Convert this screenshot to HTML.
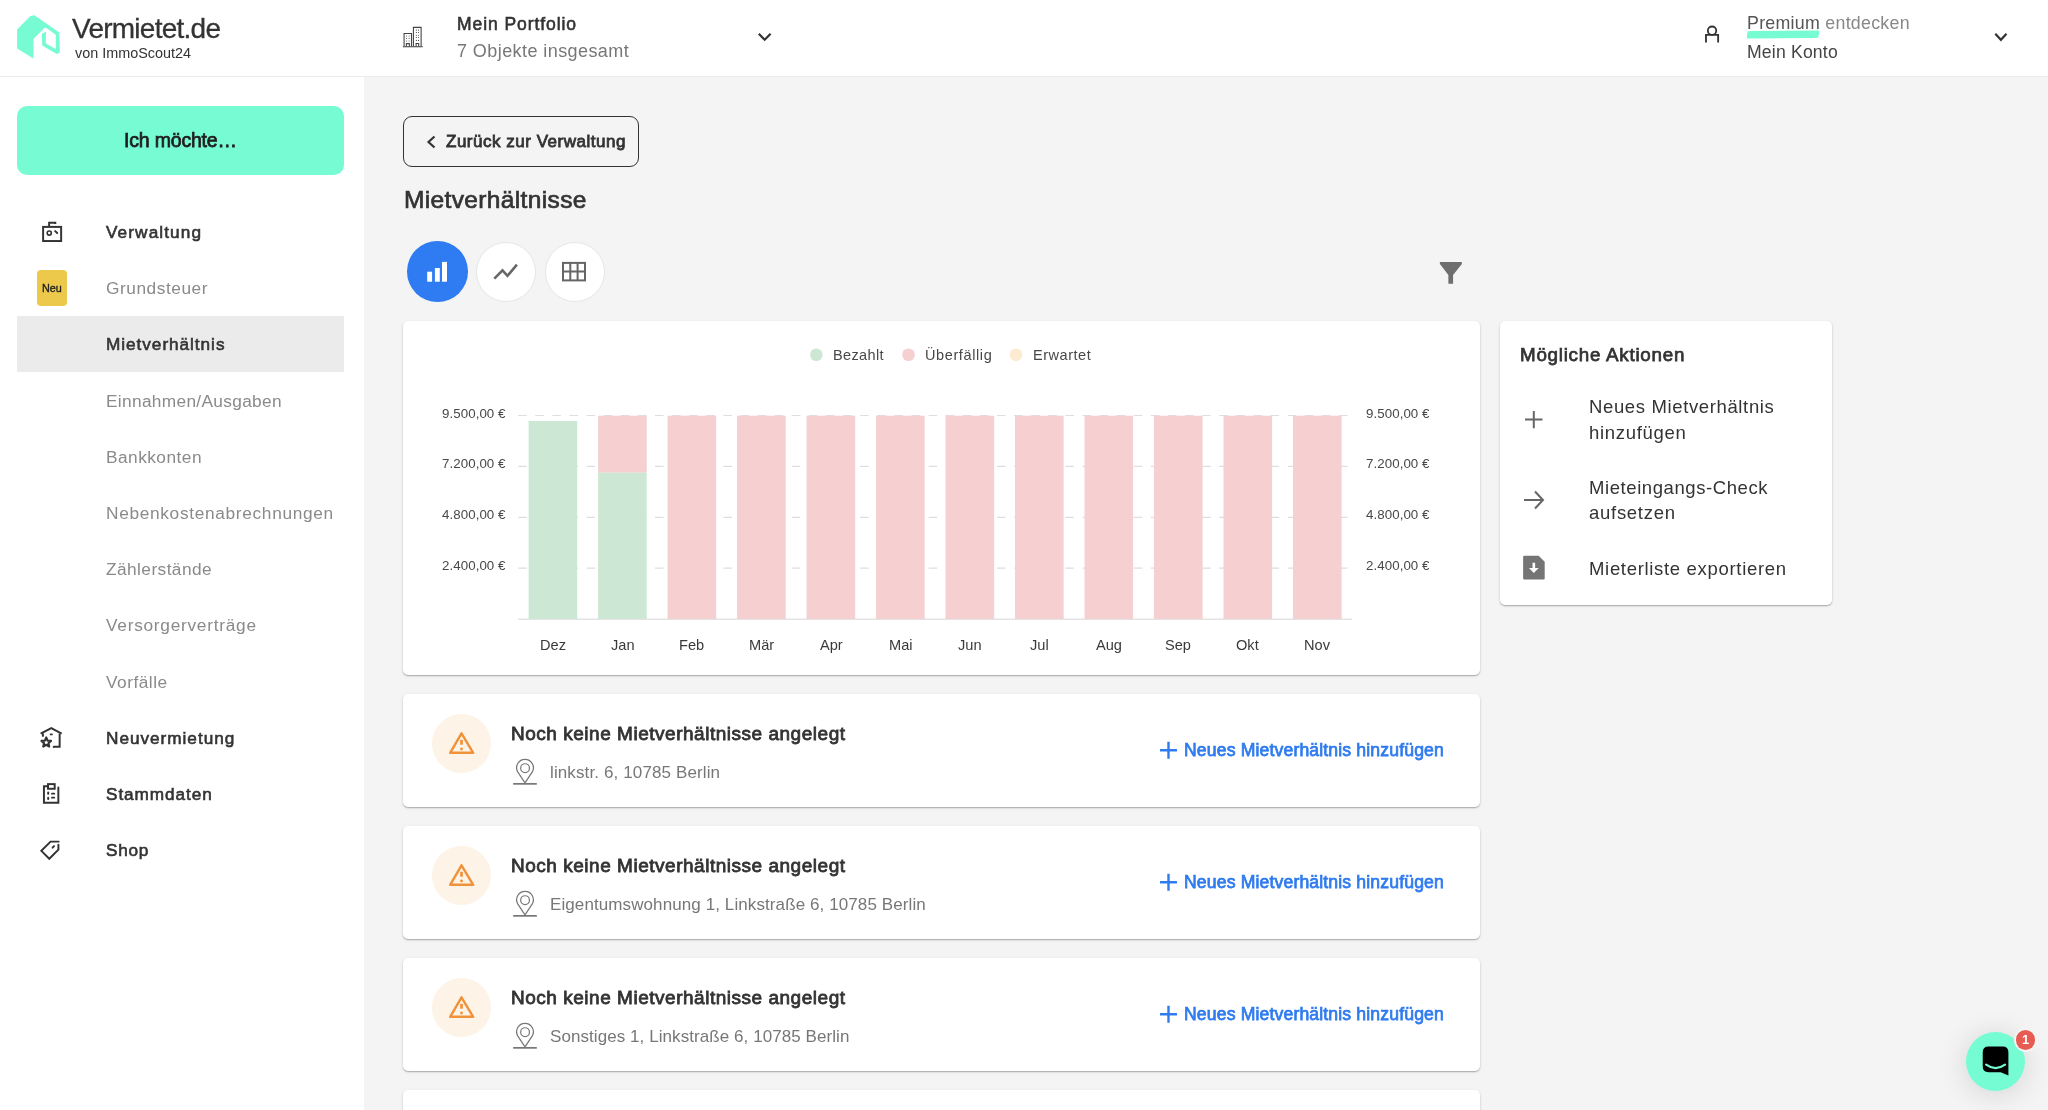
<!DOCTYPE html>
<html><head><meta charset="utf-8"><style>
*{margin:0;padding:0;box-sizing:border-box}
html,body{width:2048px;height:1110px;overflow:hidden;background:#f4f4f4;font-family:"Liberation Sans",sans-serif}
.a{position:absolute}
.t{position:absolute;line-height:1;white-space:nowrap;font-family:"Liberation Sans",sans-serif;will-change:transform}
#hdr{position:absolute;left:0;top:0;width:2048px;height:77px;background:#fff;border-bottom:1px solid #ebebeb}
#side{position:absolute;left:0;top:77px;width:364px;height:1033px;background:#fff}
.card{position:absolute;background:#fff;border-radius:5px;box-shadow:0 1px 1.5px rgba(0,0,0,.3),0 1px 5px rgba(0,0,0,.04)}
svg{position:absolute;overflow:visible}

</style></head><body>
<div id="hdr"></div>
<div id="side"></div>
<!-- logo -->
<svg style="left:0;top:0" width="70" height="70" viewBox="0 0 70 70"><path fill="#76fbd2" d="M17.1,29.5 L30.5,16.1 L34.4,15.3 L48.5,25.1 L59.2,32.4 L59.9,52.3 L56.7,54 L42.2,45.5 L41.9,33.8 L46,31.4 L45.8,43.6 L55.8,48.9 L55.8,34.8 L45.3,27.3 L33.6,38.7 L33.4,58.6 L17.1,48.4 Z"/></svg>
<!-- Ich möchte button -->
<div class="a" style="left:17px;top:106px;width:327px;height:68.5px;background:#76fbd2;border-radius:10px"></div>
<!-- selected nav -->
<div class="a" style="left:17px;top:316px;width:327px;height:56px;background:#ebebeb"></div>
<!-- Neu badge -->
<div class="a" style="left:37px;top:270px;width:30px;height:36px;background:#ecc94b;border-radius:4px"></div>
<div class="t" style="left:41.5px;top:283px;font-size:10.8px;color:#222;-webkit-text-stroke:0.35px #222">Neu</div>
<!-- back button -->
<div class="a" style="left:403px;top:116px;width:236px;height:51px;border:1.5px solid #333;border-radius:9px"></div>
<!-- chart type buttons -->
<div class="a" style="left:406.5px;top:241px;width:61.5px;height:61px;border-radius:50%;background:#2f7bf1"></div>
<div class="a" style="left:475.5px;top:241.5px;width:60px;height:60px;border-radius:50%;background:#fff;border:1px solid #e6e6e6"></div>
<div class="a" style="left:544.5px;top:241.5px;width:60px;height:60px;border-radius:50%;background:#fff;border:1px solid #e6e6e6"></div>
<!-- chart card -->
<div class="card" style="left:403px;top:321px;width:1077px;height:354px"></div>
<!-- actions card -->
<div class="card" style="left:1500px;top:321px;width:332px;height:284px"></div>
<!-- list cards -->
<div class="card" style="left:403px;top:694px;width:1077px;height:112.5px"></div>
<div class="card" style="left:403px;top:826px;width:1077px;height:112.5px"></div>
<div class="card" style="left:403px;top:958px;width:1077px;height:112.5px"></div>
<div class="card" style="left:403px;top:1090px;width:1077px;height:112.5px"></div>
<!-- warning circles -->
<div class="a" style="left:432px;top:713.5px;width:59px;height:59px;border-radius:50%;background:#fdf3e6"></div>
<div class="a" style="left:432px;top:845.5px;width:59px;height:59px;border-radius:50%;background:#fdf3e6"></div>
<div class="a" style="left:432px;top:977.5px;width:59px;height:59px;border-radius:50%;background:#fdf3e6"></div>
<div class="a" style="left:432px;top:1109.5px;width:59px;height:59px;border-radius:50%;background:#fdf3e6"></div>
<svg style="left:0;top:0" width="2048" height="1110" viewBox="0 0 2048 1110"><line x1="518.2" y1="415.5" x2="1350" y2="415.5" stroke="#dedede" stroke-width="1.2" stroke-dasharray="8.5 8.6"/><line x1="518.2" y1="466.4" x2="1350" y2="466.4" stroke="#dedede" stroke-width="1.2" stroke-dasharray="8.5 8.6"/><line x1="518.2" y1="517.3" x2="1350" y2="517.3" stroke="#dedede" stroke-width="1.2" stroke-dasharray="8.5 8.6"/><line x1="518.2" y1="568.1" x2="1350" y2="568.1" stroke="#dedede" stroke-width="1.2" stroke-dasharray="8.5 8.6"/><line x1="518.2" y1="619.3" x2="1352" y2="619.3" stroke="#e4e4e4" stroke-width="1.4"/><rect x="528.60" y="420.9" width="48.6" height="198.10" fill="#cce8d4"/><rect x="598.09" y="415.7" width="48.6" height="57.00" fill="#f6cfd0"/><rect x="598.09" y="472.7" width="48.6" height="146.30" fill="#cce8d4"/><rect x="667.58" y="415.7" width="48.6" height="203.30" fill="#f6cfd0"/><rect x="737.07" y="415.7" width="48.6" height="203.30" fill="#f6cfd0"/><rect x="806.56" y="415.7" width="48.6" height="203.30" fill="#f6cfd0"/><rect x="876.05" y="415.7" width="48.6" height="203.30" fill="#f6cfd0"/><rect x="945.54" y="415.7" width="48.6" height="203.30" fill="#f6cfd0"/><rect x="1015.03" y="415.7" width="48.6" height="203.30" fill="#f6cfd0"/><rect x="1084.52" y="415.7" width="48.6" height="203.30" fill="#f6cfd0"/><rect x="1154.01" y="415.7" width="48.6" height="203.30" fill="#f6cfd0"/><rect x="1223.50" y="415.7" width="48.6" height="203.30" fill="#f6cfd0"/><rect x="1292.99" y="415.7" width="48.6" height="203.30" fill="#f6cfd0"/><circle cx="816.3" cy="354.7" r="6.3" fill="#cce8d4"/><circle cx="908.5" cy="354.7" r="6.3" fill="#f6cfd0"/><circle cx="1016" cy="354.7" r="6.3" fill="#fcebd0"/></svg><svg style="left:36px;top:216px" width="32" height="32" viewBox="0 0 1110 1110"><g fill="none" stroke="#333" stroke-width="68" stroke-linejoin="miter"><rect x="247" y="378" width="625" height="490"/><path d="M455,378 V237 H670 V275"/><circle cx="460" cy="590" r="72" stroke-width="55"/><path d="M665,525 L735,590" stroke-linecap="round"/></g></svg>
<svg style="left:35px;top:721px" width="32" height="32" viewBox="0 0 1110 1110"><g fill="none" stroke="#333" stroke-width="68" stroke-linejoin="miter"><path d="M195,440 L565,250 L925,440"/><path d="M275,430 V545"/><path d="M855,430 V890 H660 L630,925"/><path d="M515,465 H615" stroke-width="58"/><path stroke-width="74" stroke-linejoin="round" d="M390,570 L437,680 L556,691 L466,770 L493,887 L390,825 L287,887 L314,770 L224,691 L343,680 Z"/></g></svg>
<svg style="left:35px;top:777px" width="32" height="32" viewBox="0 0 1110 1110"><g fill="none" stroke="#333" stroke-width="68" stroke-linejoin="miter"><rect x="452" y="247" width="231" height="161"/><path d="M452,320 H310 V895 H810 V360" stroke-linecap="round"/><path d="M458,540 V580 M458,720 V760" stroke-linecap="round" stroke-width="70"/><path d="M585,578 H670 M585,718 H670" stroke-linecap="round" stroke-width="58"/></g></svg>
<svg style="left:35px;top:834px" width="32" height="32" viewBox="0 0 1110 1110"><g fill="none" stroke="#333" stroke-width="68" stroke-linejoin="miter"><path d="M820,265 H540 L220,585 L495,860 L812,545 V375" stroke-linecap="round"/><path d="M610,475 L660,420" stroke-linecap="round"/></g></svg>
<svg style="left:398px;top:22px" width="30" height="30" viewBox="0 0 1110 1110"><g fill="none" stroke="#444" stroke-width="40"><path d="M180,915 H915"/><path d="M225,900 V425 H500 V900"/><path d="M570,900 V200 H855 V900"/><path d="M310,900 V800 H420 V900"/><path d="M670,900 V795 H765 V900"/></g><g fill="#444"><circle cx="318" cy="520" r="20"/><circle cx="410" cy="520" r="20"/><circle cx="318" cy="610" r="20"/><circle cx="410" cy="610" r="20"/><circle cx="318" cy="705" r="20"/><circle cx="410" cy="705" r="20"/><circle cx="680" cy="300" r="20"/><circle cx="760" cy="300" r="20"/><circle cx="680" cy="390" r="20"/><circle cx="760" cy="390" r="20"/><circle cx="680" cy="490" r="20"/><circle cx="760" cy="490" r="20"/><circle cx="680" cy="575" r="20"/><circle cx="760" cy="575" r="20"/><circle cx="680" cy="680" r="20"/><circle cx="760" cy="680" r="20"/></g></svg>
<svg style="left:1698px;top:20px" width="30" height="30" viewBox="0 0 1110 1110"><g fill="none" stroke="#333" stroke-width="68"><circle cx="520" cy="395" r="155"/><path d="M295,830 V550 H745 V830"/></g></svg>
<svg style="left:0;top:0" width="2048" height="80" viewBox="0 0 2048 80"><g fill="none" stroke="#333" stroke-width="2.2"><path d="M758.8,33.8 L764.7,39.8 L770.6,33.8"/><path d="M1995.3,33.8 L2000.9,39.8 L2006.5,33.8"/></g></svg>
<svg style="left:0;top:0" width="2048" height="80" viewBox="0 0 2048 80"><path d="M1747.5,32 Q1748,31 1750,31 L1818.5,30.5 Q1819.8,30.5 1819.3,32 L1818.3,36.5 Q1817.8,38 1816,38 L1748.5,38.5 Q1746.3,38.5 1746.7,37 Z" fill="#76fbd2"/></svg>
<svg style="left:0;top:0" width="2048" height="1110" viewBox="0 0 2048 1110"><path d="M434.5,136.5 L428.5,142 L434.5,147.5" fill="none" stroke="#333" stroke-width="2.2"/><g fill="#fff"><rect x="427.2" y="271.7" width="4.9" height="10"/><rect x="434.9" y="268" width="4.9" height="13.7"/><rect x="442" y="261.9" width="5" height="19.8"/></g><path d="M494.3,278.6 L502.5,270.4 L507.5,275.8 L516.9,264.7" fill="none" stroke="#666" stroke-width="2.6"/><g fill="none" stroke="#666" stroke-width="2"><rect x="563" y="262.9" width="22" height="17.5"/><path d="M570.3,262.9 V280.4 M577.6,262.9 V280.4 M563,271.6 H585"/></g><g fill="none" stroke="#666" stroke-width="2"><path d="M1525,419.6 H1542.5 M1533.8,411 V428.2"/><path d="M1524,500 H1542.5 M1535,491.5 L1543,500 L1535,508.5"/></g><path d="M1160,750.2 H1177 M1168.5,741.8 V758.7" fill="none" stroke="#2f7bf0" stroke-width="2.4"/><path d="M1160,882.2 H1177 M1168.5,873.8 V890.7" fill="none" stroke="#2f7bf0" stroke-width="2.4"/><path d="M1160,1014.2 H1177 M1168.5,1005.8 V1022.7" fill="none" stroke="#2f7bf0" stroke-width="2.4"/></svg>
<svg style="left:1432px;top:255px" width="36" height="36" viewBox="0 0 1110 1110"><path fill="#6e6e6e" d="M240,215 L920,215 L920,275 L650,620 L650,885 L505,885 L505,620 L245,280 Z"/></svg>
<svg style="left:1516px;top:550px" width="36" height="36" viewBox="0 0 1110 1110"><path fill="#757575" d="M260,180 L700,180 L885,360 L885,870 Q885,910 845,910 L260,910 Q220,910 220,870 L220,220 Q220,180 260,180 Z"/><path fill="#fff" d="M510,395 H590 V555 H700 L550,710 L400,555 H510 Z"/></svg>
<svg style="left:444px;top:727px" width="36" height="36" viewBox="0 0 1110 1110"><g fill="none" stroke="#f0923a" stroke-width="74" stroke-linejoin="round"><path d="M540,195 L190,795 L900,795 Z"/><path d="M540,395 V545" stroke-width="84"/></g><circle cx="540" cy="678" r="44" fill="#f0923a"/></svg>
<svg style="left:507px;top:755px" width="36" height="36" viewBox="0 0 1110 1110"><g fill="none" stroke="#777" stroke-width="38"><path d="M555,860 L330,520 A258,258 0 1 1 780,520 Z" stroke-linejoin="round"/><circle cx="557" cy="405" r="135"/><path d="M190,890 H920" stroke-width="52"/></g></svg>
<svg style="left:444px;top:859px" width="36" height="36" viewBox="0 0 1110 1110"><g fill="none" stroke="#f0923a" stroke-width="74" stroke-linejoin="round"><path d="M540,195 L190,795 L900,795 Z"/><path d="M540,395 V545" stroke-width="84"/></g><circle cx="540" cy="678" r="44" fill="#f0923a"/></svg>
<svg style="left:507px;top:887px" width="36" height="36" viewBox="0 0 1110 1110"><g fill="none" stroke="#777" stroke-width="38"><path d="M555,860 L330,520 A258,258 0 1 1 780,520 Z" stroke-linejoin="round"/><circle cx="557" cy="405" r="135"/><path d="M190,890 H920" stroke-width="52"/></g></svg>
<svg style="left:444px;top:991px" width="36" height="36" viewBox="0 0 1110 1110"><g fill="none" stroke="#f0923a" stroke-width="74" stroke-linejoin="round"><path d="M540,195 L190,795 L900,795 Z"/><path d="M540,395 V545" stroke-width="84"/></g><circle cx="540" cy="678" r="44" fill="#f0923a"/></svg>
<svg style="left:507px;top:1019px" width="36" height="36" viewBox="0 0 1110 1110"><g fill="none" stroke="#777" stroke-width="38"><path d="M555,860 L330,520 A258,258 0 1 1 780,520 Z" stroke-linejoin="round"/><circle cx="557" cy="405" r="135"/><path d="M190,890 H920" stroke-width="52"/></g></svg>
<svg style="left:444px;top:1123px" width="36" height="36" viewBox="0 0 1110 1110"><g fill="none" stroke="#f0923a" stroke-width="74" stroke-linejoin="round"><path d="M540,195 L190,795 L900,795 Z"/><path d="M540,395 V545" stroke-width="84"/></g><circle cx="540" cy="678" r="44" fill="#f0923a"/></svg>
<div class="a" style="left:1966px;top:1031.5px;width:59px;height:59px;border-radius:50%;background:#76fcd3;box-shadow:0 3px 30px rgba(0,0,0,.14)"></div>
<div class="a" style="left:2013.5px;top:1027.5px;width:24px;height:24px;border-radius:50%;background:#f4f4f4"></div>
<div class="a" style="left:2015.8px;top:1030px;width:19.5px;height:19.5px;border-radius:50%;background:#e85b52"></div>
<div class="t" style="left:2021.5px;top:1033px;font-size:13px;font-weight:700;color:#fff">1</div>
<svg style="left:1848px;top:960px" width="200" height="150" viewBox="0 0 1480 1110"><path fill="#000" d="M1040,640 H1145 Q1187,640 1187,682 V855 L1130,830 H1040 Q997,830 997,788 V682 Q997,640 1040,640 Z"/><path d="M1022,775 Q1092,825 1162,775" fill="none" stroke="#76fcd3" stroke-width="16" stroke-linecap="round"/></svg>
<div class="t" style="left:72.30px;top:15.00px;font-size:28px;color:#333;-webkit-text-stroke:0.3px #333;letter-spacing:-0.745px;">Vermietet.de</div>
<div class="t" style="left:75.00px;top:46.00px;font-size:14.4px;color:#333;">von ImmoScout24</div>
<div class="t" style="left:457.30px;top:16.00px;font-size:17.5px;color:#333;-webkit-text-stroke:0.6px #333;letter-spacing:0.924px;">Mein Portfolio</div>
<div class="t" style="left:457.00px;top:42.00px;font-size:18px;color:#777;letter-spacing:0.423px;">7 Objekte insgesamt</div>
<div class="t" style="left:1746.80px;top:44.00px;font-size:17.6px;color:#444;letter-spacing:0.189px;">Mein Konto</div>
<div class="t" style="left:124.00px;top:131.00px;font-size:19.5px;color:#1e1e1e;-webkit-text-stroke:0.75px #1e1e1e;letter-spacing:-0.188px;">Ich möchte…</div>
<div class="t" style="left:105.50px;top:224.00px;font-size:17.2px;color:#333;-webkit-text-stroke:0.6px #333;letter-spacing:1.107px;">Verwaltung</div>
<div class="t" style="left:105.50px;top:280.00px;font-size:17.3px;color:#8a8a8a;letter-spacing:0.544px;">Grundsteuer</div>
<div class="t" style="left:105.50px;top:336.00px;font-size:17.2px;color:#333;-webkit-text-stroke:0.6px #333;letter-spacing:0.959px;">Mietverhältnis</div>
<div class="t" style="left:105.50px;top:393.00px;font-size:17.3px;color:#8a8a8a;letter-spacing:0.326px;">Einnahmen/Ausgaben</div>
<div class="t" style="left:105.50px;top:449.00px;font-size:17.3px;color:#8a8a8a;letter-spacing:0.469px;">Bankkonten</div>
<div class="t" style="left:105.50px;top:505.00px;font-size:17.3px;color:#8a8a8a;letter-spacing:0.675px;">Nebenkostenabrechnungen</div>
<div class="t" style="left:105.50px;top:561.00px;font-size:17.3px;color:#8a8a8a;letter-spacing:0.430px;">Zählerstände</div>
<div class="t" style="left:105.50px;top:617.00px;font-size:17.3px;color:#8a8a8a;letter-spacing:0.730px;">Versorgerverträge</div>
<div class="t" style="left:105.50px;top:674.00px;font-size:17.3px;color:#8a8a8a;letter-spacing:0.494px;">Vorfälle</div>
<div class="t" style="left:105.50px;top:730.00px;font-size:17.2px;color:#333;-webkit-text-stroke:0.6px #333;letter-spacing:0.979px;">Neuvermietung</div>
<div class="t" style="left:105.50px;top:786.00px;font-size:17.2px;color:#333;-webkit-text-stroke:0.6px #333;letter-spacing:0.929px;">Stammdaten</div>
<div class="t" style="left:105.50px;top:842.00px;font-size:17.2px;color:#333;-webkit-text-stroke:0.6px #333;letter-spacing:0.720px;">Shop</div>
<div class="t" style="left:446.00px;top:133.00px;font-size:17px;color:#333;-webkit-text-stroke:0.8px #333;letter-spacing:0.514px;">Zurück zur Verwaltung</div>
<div class="t" style="left:404.00px;top:188.00px;font-size:24.5px;color:#333;-webkit-text-stroke:0.7px #333;letter-spacing:0.359px;">Mietverhältnisse</div>
<div class="t" style="left:833.00px;top:348.00px;font-size:14.5px;color:#484848;letter-spacing:0.356px;">Bezahlt</div>
<div class="t" style="left:924.50px;top:348.00px;font-size:14.5px;color:#484848;letter-spacing:0.606px;">Überfällig</div>
<div class="t" style="left:1032.60px;top:348.00px;font-size:14.5px;color:#484848;letter-spacing:0.531px;">Erwartet</div>
<div class="t" style="left:442.20px;top:407.00px;font-size:13.3px;color:#484848;letter-spacing:0.072px;">9.500,00 €</div>
<div class="t" style="left:1366.20px;top:407.00px;font-size:13.3px;color:#484848;letter-spacing:0.072px;">9.500,00 €</div>
<div class="t" style="left:442.20px;top:457.00px;font-size:13.3px;color:#484848;letter-spacing:0.072px;">7.200,00 €</div>
<div class="t" style="left:1366.20px;top:457.00px;font-size:13.3px;color:#484848;letter-spacing:0.072px;">7.200,00 €</div>
<div class="t" style="left:442.20px;top:508.00px;font-size:13.3px;color:#484848;letter-spacing:0.072px;">4.800,00 €</div>
<div class="t" style="left:1366.20px;top:508.00px;font-size:13.3px;color:#484848;letter-spacing:0.072px;">4.800,00 €</div>
<div class="t" style="left:442.20px;top:559.00px;font-size:13.3px;color:#484848;letter-spacing:0.072px;">2.400,00 €</div>
<div class="t" style="left:1366.20px;top:559.00px;font-size:13.3px;color:#484848;letter-spacing:0.072px;">2.400,00 €</div>
<div class="t" style="left:539.92px;top:638.00px;font-size:14.6px;color:#3a3a3a;">Dez</div>
<div class="t" style="left:610.63px;top:638.00px;font-size:14.6px;color:#3a3a3a;">Jan</div>
<div class="t" style="left:679.31px;top:638.00px;font-size:14.6px;color:#3a3a3a;">Feb</div>
<div class="t" style="left:748.80px;top:638.00px;font-size:14.6px;color:#3a3a3a;">Mär</div>
<div class="t" style="left:819.50px;top:638.00px;font-size:14.6px;color:#3a3a3a;">Apr</div>
<div class="t" style="left:888.59px;top:638.00px;font-size:14.6px;color:#3a3a3a;">Mai</div>
<div class="t" style="left:958.08px;top:638.00px;font-size:14.6px;color:#3a3a3a;">Jun</div>
<div class="t" style="left:1030.00px;top:638.00px;font-size:14.6px;color:#3a3a3a;">Jul</div>
<div class="t" style="left:1095.84px;top:638.00px;font-size:14.6px;color:#3a3a3a;">Aug</div>
<div class="t" style="left:1165.33px;top:638.00px;font-size:14.6px;color:#3a3a3a;">Sep</div>
<div class="t" style="left:1236.45px;top:638.00px;font-size:14.6px;color:#3a3a3a;">Okt</div>
<div class="t" style="left:1304.31px;top:638.00px;font-size:14.6px;color:#3a3a3a;">Nov</div>
<div class="t" style="left:1520.00px;top:346.00px;font-size:18.8px;color:#333;-webkit-text-stroke:0.75px #333;letter-spacing:0.746px;">Mögliche Aktionen</div>
<div class="t" style="left:1588.50px;top:398.00px;font-size:18.5px;color:#333;letter-spacing:0.635px;">Neues Mietverhältnis</div>
<div class="t" style="left:1588.50px;top:424.00px;font-size:18.5px;color:#333;letter-spacing:0.686px;">hinzufügen</div>
<div class="t" style="left:1588.50px;top:479.00px;font-size:18.5px;color:#333;letter-spacing:0.580px;">Mieteingangs-Check</div>
<div class="t" style="left:1588.50px;top:504.00px;font-size:18.5px;color:#333;letter-spacing:0.722px;">aufsetzen</div>
<div class="t" style="left:1588.50px;top:560.00px;font-size:18.5px;color:#333;letter-spacing:0.682px;">Mieterliste exportieren</div>
<div class="t" style="left:511.40px;top:724.00px;font-size:19px;color:#333;-webkit-text-stroke:0.8px #333;letter-spacing:0.520px;">Noch keine Mietverhältnisse angelegt</div>
<div class="t" style="left:550.20px;top:764.00px;font-size:17px;color:#777;letter-spacing:0.119px;">linkstr. 6, 10785 Berlin</div>
<div class="t" style="left:1184.00px;top:742.00px;font-size:17.6px;color:#2f7bf0;-webkit-text-stroke:0.75px #2f7bf0;letter-spacing:0.151px;">Neues Mietverhältnis hinzufügen</div>
<div class="t" style="left:511.40px;top:856.00px;font-size:19px;color:#333;-webkit-text-stroke:0.8px #333;letter-spacing:0.520px;">Noch keine Mietverhältnisse angelegt</div>
<div class="t" style="left:550.20px;top:896.00px;font-size:17px;color:#777;letter-spacing:0.096px;">Eigentumswohnung 1, Linkstraße 6, 10785 Berlin</div>
<div class="t" style="left:1184.00px;top:874.00px;font-size:17.6px;color:#2f7bf0;-webkit-text-stroke:0.75px #2f7bf0;letter-spacing:0.151px;">Neues Mietverhältnis hinzufügen</div>
<div class="t" style="left:511.40px;top:988.00px;font-size:19px;color:#333;-webkit-text-stroke:0.8px #333;letter-spacing:0.520px;">Noch keine Mietverhältnisse angelegt</div>
<div class="t" style="left:550.20px;top:1028.00px;font-size:17px;color:#777;letter-spacing:0.070px;">Sonstiges 1, Linkstraße 6, 10785 Berlin</div>
<div class="t" style="left:1184.00px;top:1006.00px;font-size:17.6px;color:#2f7bf0;-webkit-text-stroke:0.75px #2f7bf0;letter-spacing:0.151px;">Neues Mietverhältnis hinzufügen</div>
<div class="t" style="left:1746.8px;top:15.00px;font-size:17.8px;letter-spacing:0.279px;color:#888"><span style="color:#555">Premium</span> entdecken</div>
</body></html>
